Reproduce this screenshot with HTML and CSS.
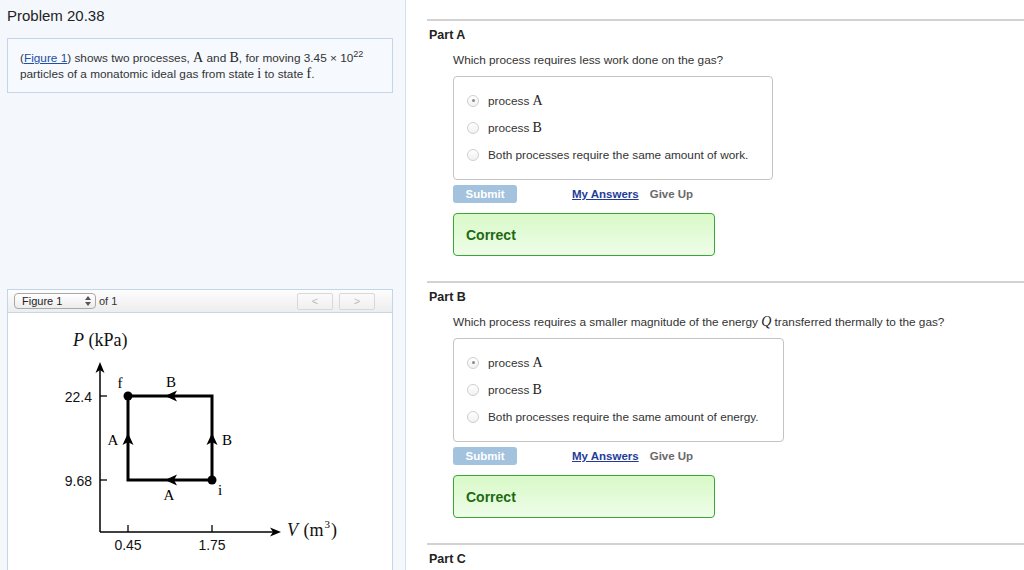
FILE: index.html
```html
<!DOCTYPE html>
<html>
<head>
<meta charset="utf-8">
<link rel="stylesheet" href="styles.css">
</head>
<body>
<div class="page">
  <aside class="left">
    <h1 class="title">Problem 20.38</h1>
    <div class="intro">(<a class="link" href="#">Figure 1</a>) shows two processes, <span class="m">A</span> and <span class="m">B</span>, for moving 3.45 × 10<sup>22</sup><br>particles of a monatomic ideal gas from state <span class="m">i</span> to state <span class="m">f</span>.</div>
    <div class="figure">
      <div class="fig-head">
        <div class="select">Figure 1<svg class="updown" width="6" height="10" viewBox="0 0 6 10"><path d="M3 0 L6 4 L0 4 Z M3 10 L6 6 L0 6 Z" fill="#555"/></svg></div>
        <span class="of">of 1</span>
        <div class="navs">
          <span class="nav">&lt;</span>
          <span class="nav">&gt;</span>
        </div>
      </div>
      <svg class="graph" width="384" height="257" viewBox="8 313 384 257">
        <g stroke="#000" fill="none">
          <line x1="100" y1="368" x2="100" y2="532" stroke-width="1.5"/>
          <line x1="100" y1="532" x2="276" y2="532" stroke-width="1.5"/>
          <line x1="100" y1="396" x2="107" y2="396" stroke-width="1.3"/>
          <line x1="100" y1="480" x2="107" y2="480" stroke-width="1.3"/>
          <line x1="128" y1="525" x2="128" y2="532" stroke-width="1.3"/>
          <line x1="212" y1="525" x2="212" y2="532" stroke-width="1.3"/>
          <path d="M128 480 L128 396 L212 396 L212 480 Z" stroke-width="3" stroke-linejoin="miter"/>
        </g>
        <g fill="#000">
          <path d="M100 362 L95.5 373 L100 370 L104.5 373 Z"/>
          <path d="M281 532 L270 527.5 L273 532 L270 536.5 Z"/>
          <path d="M165 396 L177 390.5 L174 396 L177 401.5 Z"/>
          <path d="M165 480 L177 474.5 L174 480 L177 485.5 Z"/>
          <path d="M128 433 L122.5 445 L128 442 L133.5 445 Z"/>
          <path d="M212 433 L206.5 445 L212 442 L217.5 445 Z"/>
          <circle cx="128" cy="396" r="4.5"/>
          <circle cx="212" cy="480" r="4.5"/>
        </g>
        <g class="serif">
          <text x="120" y="388" text-anchor="middle">f</text>
          <text x="171" y="387" text-anchor="middle">B</text>
          <text x="113" y="445" text-anchor="middle">A</text>
          <text x="227" y="445" text-anchor="middle">B</text>
          <text x="169" y="500" text-anchor="middle">A</text>
          <text x="220" y="495" text-anchor="middle">i</text>
        </g>
        <g class="nums">
          <text x="92" y="402" text-anchor="end">22.4</text>
          <text x="92" y="486" text-anchor="end">9.68</text>
          <text x="128" y="550" text-anchor="middle">0.45</text>
          <text x="212" y="550" text-anchor="middle">1.75</text>
        </g>
        <g class="axislabel">
          <text x="73" y="346"><tspan font-style="italic">P</tspan> (kPa)</text>
          <text x="287" y="536"><tspan font-style="italic">V</tspan> <tspan dx="1">(m</tspan><tspan font-size="11" dx="1" dy="-8">3</tspan><tspan dx="1" dy="8">)</tspan></text>
        </g>
      </svg>
    </div>
  </aside>
  <main class="right">
    <section class="part">
      <h2 class="part-title">Part A</h2>
      <p class="q">Which process requires less work done on the gas?</p>
      <div class="choices">
        <div class="row"><span class="radio checked"></span><span>process <span class="m">A</span></span></div>
        <div class="row"><span class="radio"></span><span>process <span class="m">B</span></span></div>
        <div class="row"><span class="radio"></span><span>Both processes require the same amount of work.</span></div>
      </div>
      <div class="actions">
        <span class="submit">Submit</span>
        <a class="answers" href="#">My Answers</a>
        <span class="giveup">Give Up</span>
      </div>
      <div class="correct">Correct</div>
    </section>
    <section class="part">
      <h2 class="part-title">Part B</h2>
      <p class="q">Which process requires a smaller magnitude of the energy <span class="m mi">Q</span> transferred thermally to the gas?</p>
      <div class="choices">
        <div class="row"><span class="radio checked"></span><span>process <span class="m">A</span></span></div>
        <div class="row"><span class="radio"></span><span>process <span class="m">B</span></span></div>
        <div class="row"><span class="radio"></span><span>Both processes require the same amount of energy.</span></div>
      </div>
      <div class="actions">
        <span class="submit">Submit</span>
        <a class="answers" href="#">My Answers</a>
        <span class="giveup">Give Up</span>
      </div>
      <div class="correct">Correct</div>
    </section>
    <section class="part last">
      <h2 class="part-title">Part C</h2>
    </section>
  </main>
</div>
</body>
</html>
```

FILE: styles.css
```css
* { box-sizing: border-box; }
html, body { margin: 0; padding: 0; }
body {
  font-family: "Liberation Sans", Arial, sans-serif;
  color: #333;
  background: #fff;
  font-size: 12px;
}
.page {
  display: flex;
  width: 1024px;
  height: 570px;
  overflow: hidden;
}
.left {
  width: 406px;
  flex: none;
  background: #f4f8fd;
  border-right: 1px solid #d3e0ef;
  padding: 0 12px 0 7px;
}
.title {
  margin: 7px 0 0 0;
  font-size: 15px;
  line-height: 18px;
  font-weight: normal;
  color: #222;
}
.intro {
  margin-top: 13px;
  border: 1px solid #c5d5e8;
  background: #f6f9fd;
  padding: 11px 12px 10px 12px;
  line-height: 16px;
  font-size: 11.8px;
  color: #333;
}
.intro sup {
  font-size: 9px;
  line-height: 0;
  vertical-align: 5px;
}
.link { color: #1d4fa6; text-decoration: underline; }
.m {
  font-family: "Liberation Serif", "Times New Roman", serif;
  font-size: 14px;
  color: #222;
}
.mi { font-style: italic; }
.figure {
  margin-top: 196px;
  border: 1px solid #c5d5e8;
  background: #fff;
  height: 300px;
}
.fig-head {
  height: 23px;
  border-bottom: 1px solid #c9d6e6;
  background: linear-gradient(#fdfdfd, #ededed);
  display: flex;
  align-items: center;
  padding-left: 6px;
}
.select {
  width: 82px;
  height: 16px;
  border: 1px solid #a9a9a9;
  border-radius: 4px;
  background: linear-gradient(#ffffff, #ececec);
  display: flex;
  align-items: center;
  justify-content: space-between;
  padding: 0 4px 0 7px;
  font-size: 11px;
  color: #222;
}
.of { margin-left: 3px; font-size: 11px; color: #333; }
.navs {
  margin-left: auto;
  margin-right: 17px;
  display: flex;
  gap: 6px;
}
.nav {
  width: 36px;
  height: 17px;
  border: 1px solid #d8d8d8;
  border-radius: 2px;
  background: linear-gradient(#fafafa, #f0f0f0);
  color: #bbb;
  font-size: 11px;
  display: flex;
  align-items: center;
  justify-content: center;
}
.graph { display: block; }
.serif text {
  font-family: "Liberation Serif", "Times New Roman", serif;
  font-size: 15px;
  fill: #000;
}
.nums text {
  font-family: "Liberation Sans", Arial, sans-serif;
  font-size: 14px;
  fill: #111;
}
.axislabel text {
  font-family: "Liberation Serif", "Times New Roman", serif;
  font-size: 18px;
  fill: #111;
}
.right {
  flex: 1;
  padding: 19px 0 0 21px;
}
.part {
  height: 262px;
  border-top: 2px solid #d2d2d2;
  padding-top: 6px;
}
.part-title {
  margin: 0;
  padding-left: 2px;
  font-size: 12.5px;
  line-height: 16px;
  font-weight: bold;
  color: #222;
}
.q {
  margin: 9px 0 0 26px;
  line-height: 16px;
  font-size: 11.8px;
  color: #333;
}
.choices {
  margin: 8px 0 0 26px;
  width: fit-content;
  border: 1px solid #c4c4c4;
  border-radius: 4px;
  padding: 10px 24px 11px 13px;
  background: #fff;
}
.row {
  height: 27px;
  display: flex;
  align-items: center;
  gap: 9px;
  font-size: 11.8px;
  color: #333;
}
.radio {
  width: 12px;
  height: 12px;
  border-radius: 50%;
  border: 1px solid #cfcfcf;
  background: linear-gradient(#ffffff, #f1f1f1);
  display: flex;
  align-items: center;
  justify-content: center;
  flex: none;
}
.radio.checked::after {
  content: "";
  width: 3px;
  height: 3px;
  border-radius: 50%;
  background: #8a8a8a;
}
.actions {
  margin: 5px 0 0 26px;
  height: 18px;
  display: flex;
  align-items: center;
  font-weight: bold;
  font-size: 11.5px;
}
.submit {
  width: 64px;
  height: 18px;
  border-radius: 3px;
  background: #a2c2de;
  color: #fff;
  display: flex;
  align-items: center;
  justify-content: center;
}
.answers {
  margin-left: 55px;
  color: #1f3c98;
  text-decoration: underline;
}
.giveup {
  margin-left: 11px;
  color: #6a6a6a;
}
.correct {
  margin: 10px 0 0 26px;
  width: 262px;
  height: 43px;
  border: 1px solid #3aa634;
  border-radius: 4px;
  background: linear-gradient(#d8f9c8, #eefde8);
  padding-left: 12px;
  display: flex;
  align-items: center;
  font-size: 14px;
  font-weight: bold;
  color: #1d6a12;
}
.part.last { height: auto; }
```
